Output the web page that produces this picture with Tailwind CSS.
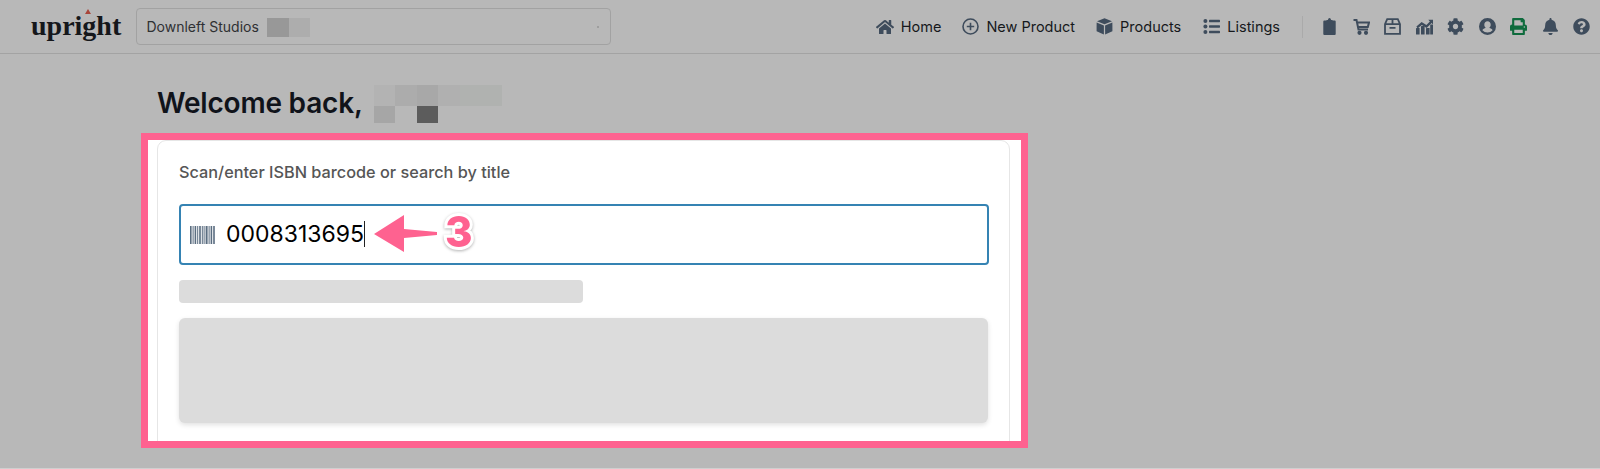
<!DOCTYPE html>
<html lang="en">
<head>
  <meta charset="UTF-8" />
  <title>Upright</title>
  <script src="https://cdn.jsdelivr.net/npm/@tailwindcss/browser@4"></script>
</head>
<body class="h-[469px] overflow-hidden flex flex-col bg-[#b8b8b8] font-['Inter',sans-serif]">

  <!-- Header -->
  <header class="h-[54px] shrink-0 border-b border-[#a3a3a3] flex items-center pl-[31px] pr-[10px]">
    <div class="relative w-[104.5px] shrink-0 font-['Liberation_Serif',serif] font-bold text-[28px] leading-none text-[#15171b] -mt-[2px]">
      upright
      <span class="absolute left-[54px] top-[-3px] w-0 h-0 border-x-[3px] border-x-transparent border-b-[5px] border-b-[#a8453a]"></span>
    </div>
    <div class="w-[475px] h-[37px] shrink-0 border border-[#a2a2a2] rounded-[4px] flex items-center pl-[10px] pr-[11px] text-[14px] text-[#2f3033]">
      <span>Downleft Studios</span>
      <span class="ml-[8px] w-[22px] h-[19px] mt-[2px] bg-[#989898]"></span>
      <span class="w-[21px] h-[19px] mt-[2px] bg-[#adadad]"></span>
      <span class="ml-auto w-[2px] h-[2px] rounded-full bg-[#969696]"></span>
    </div>

    <nav class="ml-auto flex items-center text-[14.5px] text-[#16181c]">
      <a class="flex items-center gap-[7px] mr-[21px]">
        <svg class="w-[18px] h-[16px] fill-[#3e4c5c]" viewBox="0 0 576 512"><path d="M280.37 148.26L96 300.11V464a16 16 0 0 0 16 16l112.06-.29a16 16 0 0 0 15.92-16V368a16 16 0 0 1 16-16h64a16 16 0 0 1 16 16v95.64a16 16 0 0 0 16 16.05L464 480a16 16 0 0 0 16-16V300L295.67 148.26a12.19 12.19 0 0 0-15.3 0zM571.6 251.47L488 182.56V44.05a12 12 0 0 0-12-12h-56a12 12 0 0 0-12 12v72.61L318.47 43a48 48 0 0 0-61 0L4.34 251.47a12 12 0 0 0-1.6 16.9l25.5 31A12 12 0 0 0 45.15 301l235.22-193.74a12.19 12.19 0 0 1 15.3 0L530.9 301a12 12 0 0 0 16.9-1.6l25.5-31a12 12 0 0 0-1.7-16.93z"/></svg>
        Home
      </a>
      <a class="flex items-center gap-[7px] mr-[21px]">
        <svg class="w-[17px] h-[17px] fill-none stroke-[#3e4c5c]" viewBox="0 0 17 17" stroke-width="1.6"><circle cx="8.5" cy="8.5" r="7.5"/><path d="M8.5 4.8v7.4M4.8 8.5h7.4"/></svg>
        New Product
      </a>
      <a class="flex items-center gap-[7px] mr-[22px]">
        <svg class="w-[17px] h-[17px] fill-[#3e4c5c]" viewBox="0 0 17 17"><path d="M8.5.3L16 3.2 8.5 6.3 1 3.2z"/><path d="M.6 4.4l7.3 3v9.2L.6 13.2z"/><path d="M9.1 7.4l7.3-3v8.8l-7.3 3.4z"/></svg>
        Products
      </a>
      <a class="flex items-center gap-[7px]">
        <svg class="w-[17px] h-[17px] fill-[#3e4c5c]" viewBox="0 0 17 17"><circle cx="2.4" cy="3" r="2"/><circle cx="2.4" cy="8.5" r="2"/><circle cx="2.4" cy="14" r="2"/><rect x="6" y="1.8" width="11" height="2.4" rx=".6"/><rect x="6" y="7.3" width="11" height="2.4" rx=".6"/><rect x="6" y="12.8" width="11" height="2.4" rx=".6"/></svg>
        Listings
      </a>
      <span class="w-px h-[22px] bg-[#aaaaaa] ml-[21.5px] mr-[18.5px]"></span>

      <!-- Icon row -->
      <div class="flex items-center gap-[14.5px]">
        <svg class="w-[17px] h-[17px] fill-[#3e4c5c]" viewBox="0 0 17 17"><path d="M3.3 2.4h2.2V2h1.4C7.2.7 7.7 0 8.5 0s1.3.7 1.6 2h1.4v.4h2.2a1 1 0 0 1 1 1V16a1 1 0 0 1-1 1H3.3a1 1 0 0 1-1-1V3.4a1 1 0 0 1 1-1z"/></svg>
        <svg class="w-[17px] h-[17px] fill-none stroke-[#3e4c5c]" viewBox="0 0 17 17" stroke-width="2"><path d="M.5 2h3l2 9.5h9.5M4.5 4.5h11.5l-1.2 4.5H5.5"/><circle cx="6.5" cy="14.8" r="1.1" fill="#3e4c5c"/><circle cx="13" cy="14.8" r="1.1" fill="#3e4c5c"/></svg>
        <svg class="w-[17px] h-[17px] fill-none stroke-[#3e4c5c]" viewBox="0 0 17 17" stroke-width="1.8"><path d="M1 6.2L3.2 1.2h10.6L16 6.2v9.6H1zM1 6.2h15M5.5 9.8h6M8.5 1.2v5"/></svg>
        <svg class="w-[17px] h-[17px] fill-[#3e4c5c]" viewBox="0 0 17 17"><rect x="0" y="10" width="3.6" height="6.5" rx=".5"/><rect x="5" y="8" width="3.6" height="8.5" rx=".5"/><rect x="10" y="10" width="3.6" height="6.5" rx=".5"/><rect x="14.2" y="6.5" width="2.8" height="10" rx=".5"/><path d="M.4 8.4L5.6 4l4.8 3 3.5-3.6-1.6-1.6H17v4.6l-1.4-1.4-5 5-4.8-3-4.2 3.6z"/></svg>
        <svg class="w-[17px] h-[17px] fill-[#3e4c5c]" viewBox="0 0 512 512"><path d="M487.4 315.7l-42.6-24.6c4.3-23.2 4.3-47 0-70.2l42.6-24.6c4.9-2.8 7.1-8.6 5.5-14-11.1-35.6-30-67.8-54.7-94.6-3.8-4.1-10-5.1-14.8-2.3L380.8 110c-17.9-15.4-38.5-27.3-60.8-35.1V25.8c0-5.6-3.9-10.5-9.4-11.7-36.7-8.2-74.3-7.8-109.2 0-5.5 1.2-9.4 6.1-9.4 11.7V75c-22.2 7.9-42.8 19.8-60.8 35.1L88.7 85.5c-4.9-2.8-11-1.9-14.8 2.3-24.7 26.7-43.6 58.9-54.7 94.6-1.7 5.4.6 11.2 5.5 14L67.3 221c-4.3 23.2-4.3 47 0 70.2l-42.6 24.6c-4.9 2.8-7.1 8.6-5.5 14 11.1 35.6 30 67.8 54.7 94.6 3.8 4.1 10 5.1 14.8 2.3l42.6-24.6c17.9 15.4 38.5 27.3 60.8 35.1v49.2c0 5.6 3.9 10.5 9.4 11.7 36.7 8.2 74.3 7.8 109.2 0 5.5-1.2 9.4-6.1 9.4-11.7v-49.2c22.2-7.9 42.8-19.8 60.8-35.1l42.6 24.6c4.9 2.8 11 1.9 14.8-2.3 24.7-26.7 43.6-58.9 54.7-94.6 1.5-5.5-.7-11.3-5.6-14.1zM256 336c-44.1 0-80-35.9-80-80s35.9-80 80-80 80 35.9 80 80-35.9 80-80 80z"/></svg>
        <svg class="w-[17px] h-[17px] fill-[#3e4c5c]" viewBox="0 0 17 17"><path fill-rule="evenodd" d="M8.5 0a8.5 8.5 0 1 1 0 17 8.5 8.5 0 0 1 0-17zm0 3.2c-1.9 0-3.2 1.5-3.2 3.5 0 1.3.6 2.5 1.5 3.1-1.5.4-2.8 1.2-3.4 2.4a6.6 6.6 0 0 0 10.2 0c-.6-1.2-1.9-2-3.4-2.4.9-.6 1.5-1.8 1.5-3.1 0-2-1.3-3.5-3.2-3.5z"/></svg>
        <svg class="w-[17px] h-[17px] fill-[#0f6b3d]" viewBox="0 0 512 512"><path d="M448 192V77.25c0-8.49-3.37-16.62-9.37-22.63L393.37 9.37c-6-6-14.14-9.37-22.63-9.37H96C78.33 0 64 14.33 64 32v160c-35.35 0-64 28.65-64 64v112c0 8.84 7.16 16 16 16h48v96c0 17.67 14.33 32 32 32h320c17.67 0 32-14.33 32-32v-96h48c8.84 0 16-7.16 16-16V256c0-35.35-28.65-64-64-64zm-64 256H128v-96h256v96zm0-224H128V64h192v48c0 8.84 7.16 16 16 16h48v96zm48 72c-13.25 0-24-10.75-24-24 0-13.26 10.75-24 24-24s24 10.74 24 24c0 13.25-10.75 24-24 24z"/></svg>
        <svg class="w-[17px] h-[17px] fill-[#3e4c5c]" viewBox="0 0 448 512"><path d="M224 512c35.32 0 63.97-28.65 63.97-64H160.03c0 35.35 28.65 64 63.97 64zm215.39-149.71c-19.32-20.76-55.47-51.99-55.47-154.29 0-77.7-54.48-139.9-127.94-155.16V32c0-17.67-14.32-32-31.98-32s-31.98 14.33-31.98 32v20.84C118.56 68.1 64.08 130.3 64.08 208c0 102.3-36.15 133.53-55.47 154.29-6 6.45-8.66 14.16-8.61 21.71.11 16.4 12.98 32 32.1 32h383.8c19.12 0 32-15.6 32.1-32 .05-7.55-2.61-15.27-8.61-21.71z"/></svg>
        <svg class="w-[17px] h-[17px] fill-[#3e4c5c]" viewBox="0 0 512 512"><path d="M504 256c0 136.997-111.043 248-248 248S8 392.997 8 256C8 119.083 119.043 8 256 8s248 111.083 248 248zM262.655 90c-54.497 0-89.255 22.957-116.549 63.758-3.536 5.286-2.353 12.415 2.715 16.258l34.699 26.31c5.205 3.947 12.621 3.008 16.665-2.122 17.864-22.658 30.113-35.797 57.303-35.797 20.429 0 45.698 13.148 45.698 32.958 0 14.976-12.363 22.667-32.534 33.976C247.128 238.528 216 254.941 216 296v4c0 6.627 5.373 12 12 12h56c6.627 0 12-5.373 12-12v-1.333c0-28.462 83.186-29.647 83.186-106.667 0-58.002-60.165-102-116.531-102zM256 338c-25.365 0-46 20.635-46 46 0 25.364 20.635 46 46 46s46-20.636 46-46c0-25.365-20.635-46-46-46z"/></svg>
      </div>
    </nav>
  </header>

  <!-- Main Content -->
  <main class="pl-[141px]">
    <div class="h-[79px] pl-[16px] pt-[31px] flex items-start">
      <h1 class="text-[28px] leading-[36px] font-semibold text-[#10131a] tracking-[-0.2px]">Welcome back,</h1>
      <!-- blurred name -->
      <div class="ml-[11px] grid grid-cols-[21.5px_21.5px_21.5px_21.5px_42px] grid-rows-[21px_17px]">
        <span class="bg-[#b3b3b3]"></span><span class="bg-[#acacac]"></span><span class="bg-[#a8a8a8]"></span><span class="bg-[#b0b0b0]"></span><span class="bg-[#b0b2b0]"></span>
        <span class="bg-[#a6a6a6]"></span><span></span><span class="bg-[#5c5c5c]"></span><span></span><span></span>
      </div>
    </div>

    <!-- Annotation frame -->
    <div class="w-[887px] h-[315px] border-[7px] border-[#fe6290] bg-white pl-[9px] overflow-hidden">
      <div class="w-[853px] h-[320px] border border-[#e6e6e6] rounded-t-[9px] pl-[21px] pr-[20px] pt-[21px]">
        <p class="text-[16.3px] leading-[20px] font-medium text-[#565656]">Scan/enter ISBN barcode or search by title</p>

        <div class="relative mt-[22px] h-[61px] border-2 border-[#3583b3] rounded-[4px] flex items-center pl-[9px]">
          <svg class="w-[26px] h-[18px] shrink-0" viewBox="0 0 26 18" fill="#5a6d80"><rect x="0" width="1.6" height="18"/><rect x="2.6" width="1" height="18"/><rect x="4.6" width="1.6" height="18"/><rect x="7.2" width="1" height="18"/><rect x="9.2" width="1.6" height="18"/><rect x="11.8" width="1" height="18"/><rect x="13.6" width="1" height="18"/><rect x="15.6" width="2" height="18"/><rect x="18.6" width="1" height="18"/><rect x="20.6" width="1.6" height="18"/><rect x="23.2" width="1.6" height="18"/></svg>
          <span class="ml-[10px] -mt-[1px] text-[23px] leading-[26px] text-black border-r border-[#222]">0008313695</span>

          <!-- Arrow and step number -->
          <svg class="absolute left-[193px] top-[8px] w-[64px] h-[40px]" viewBox="0 0 64 40" fill="#fe6290"><path d="M0 20L30 1V15L63 18V21L30 24V38z"/></svg>
          <span class="absolute left-[264px] top-[6px] text-[42px] leading-[40px] font-extrabold text-[#fe6290] [-webkit-text-stroke:6px_white] [paint-order:stroke_fill] [filter:drop-shadow(0_1px_1.5px_rgba(0,0,0,0.3))]">3</span>
        </div>

        <div class="mt-[15px] w-[404px] h-[23px] rounded-[4px] bg-[#dcdcdc]"></div>
        <div class="mt-[15px] w-[809px] h-[105px] rounded-[6px] bg-[#dcdcdc] shadow-[0_2px_5px_rgba(0,0,0,0.12)]"></div>
      </div>
    </div>
  </main>

  <div class="mt-auto h-px bg-[#cfcfcf]"></div>

</body>
</html>
